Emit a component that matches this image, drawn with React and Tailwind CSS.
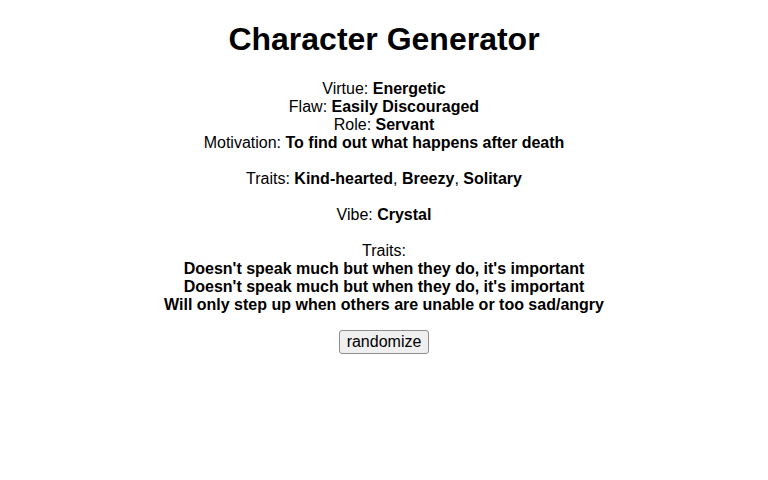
export default function App() {
  const Line = ({ label, children }) => (
    <div className="h-[18px]">
      {label}
      {children}
    </div>
  );
  return (
    <div className="min-h-[480px] bg-white text-black text-center text-[16px] leading-[18px]" style={{ fontFamily: '"Liberation Sans", Arial, sans-serif' }}>
      <h1 className="pt-[21px] pb-[22px] text-[32px] leading-[37px] font-bold">Character Generator</h1>
      <Line label="Virtue: "><b>Energetic</b></Line>
      <Line label="Flaw: "><b>Easily Discouraged</b></Line>
      <Line label="Role: "><b>Servant</b></Line>
      <Line label="Motivation: "><b>To find out what happens after death</b></Line>
      <div className="h-[18px]" />
      <Line label="Traits: "><b>Kind-hearted</b>, <b>Breezy</b>, <b>Solitary</b></Line>
      <div className="h-[18px]" />
      <Line label="Vibe: "><b>Crystal</b></Line>
      <div className="h-[18px]" />
      <Line label="Traits:" />
      <div className="h-[18px] font-bold">Doesn't speak much but when they do, it's important</div>
      <div className="h-[18px] font-bold">Doesn't speak much but when they do, it's important</div>
      <div className="h-[18px] font-bold">Will only step up when others are unable or too sad/angry</div>
      <div className="pt-[16px]">
        <button className="h-[24px] px-[7px] border border-[#8f8f8f] rounded-[3px] bg-[#efefef] text-[16px] leading-[18px] text-black">randomize</button>
      </div>
    </div>
  );
}
